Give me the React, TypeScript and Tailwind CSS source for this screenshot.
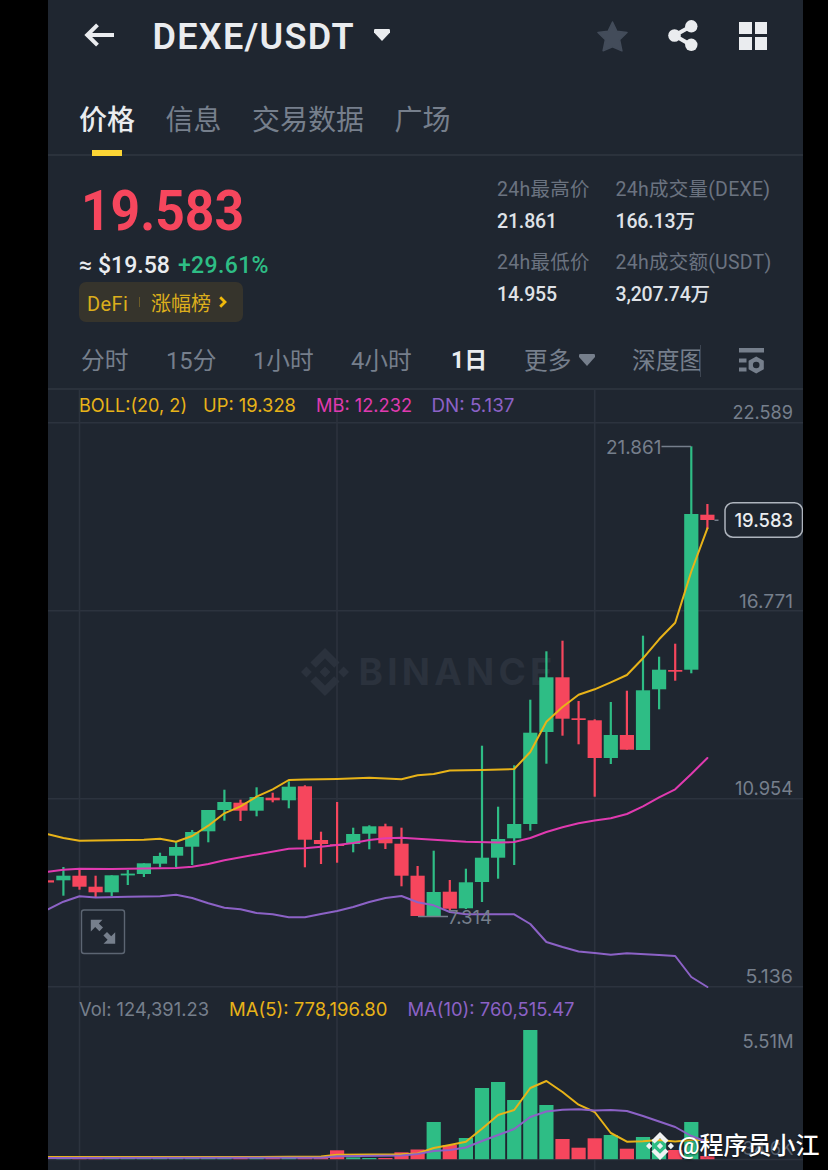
import React from "react";

const UP = "#2ebd85";
const DOWN = "#f6465d";
const YELLOW = "#e8b318";
const PINK = "#e03ab0";
const PURPLE = "#8c62c6";
const GRAY = "#767f8c";

const cx = (i: number) => 63.4 + 16.1 * i;

type Candle = [dir: 0 | 1, high: number, top: number, bottom: number, low: number];

const candles: Candle[] = [
  [1, 867, 875.7, 880.3, 895.7],
  [0, 869, 875.7, 886.7, 889.7],
  [0, 875.7, 886.7, 892.3, 897],
  [1, 875.3, 875.3, 892.3, 896],
  [1, 870, 873.6, 875.4, 885],
  [1, 863.3, 863.3, 874, 877],
  [1, 852.7, 856, 863.7, 867.3],
  [1, 842.3, 847, 855.7, 867.3],
  [1, 830, 832, 846.7, 865],
  [1, 810, 810, 831.3, 842.3],
  [1, 789.7, 802, 810, 820.7],
  [0, 799.7, 802.7, 810.7, 821],
  [1, 787.3, 797, 810.7, 816.3],
  [0, 792.7, 797.7, 800.3, 802.3],
  [1, 781.3, 786.7, 800.3, 808.3],
  [0, 785.3, 786.3, 839.7, 867.3],
  [0, 831.7, 840, 844, 864],
  [0, 802, 844.3, 846, 862.7],
  [1, 827.7, 834, 844, 852.3],
  [1, 825.3, 826.3, 833.7, 849.3],
  [0, 823.7, 826.3, 843.3, 849],
  [0, 827.7, 843.7, 875.7, 886.3],
  [0, 866, 875.7, 916, 916],
  [1, 850.7, 892, 916.3, 916.3],
  [0, 880, 891.7, 908.7, 910],
  [1, 868.7, 882.3, 908.3, 909],
  [1, 745.7, 857.7, 882, 902],
  [1, 806.7, 839, 857.7, 878.7],
  [1, 765.3, 824, 838.3, 865],
  [1, 699.7, 732.7, 824, 830.7],
  [1, 651.3, 677.3, 732, 763.7],
  [0, 640.7, 677.3, 718.7, 735.7],
  [0, 701, 718.3, 720, 744.3],
  [0, 719.3, 720.3, 758, 796.7],
  [1, 702, 735, 758, 764],
  [0, 690.7, 735, 749.7, 749.7],
  [1, 635.7, 690.3, 750, 750],
  [1, 656.7, 669.7, 689.3, 709.3],
  [0, 643.7, 670, 671.7, 680.7],
  [1, 446.3, 514, 669.7, 673.3],
  [0, 504, 514.7, 520, 529],
];

const volumes = [
  1158, 1158, 1158, 1158, 1158, 1158, 1158, 1158, 1157.6, 1157.6, 1157.6, 1158, 1157.6, 1158, 1158,
  1157.4, 1157.4, 1150.3, 1157.4, 1158, 1158, 1152.3, 1149.5, 1122, 1145, 1138, 1088, 1082, 1100,
  1030, 1105, 1139, 1147.7, 1138.3, 1135, 1148.7, 1137, 1139, 1150, 1122, 1156,
];

type Point = [index: number, y: number];

const bollUp: Point[] = [
  [-0.95, 834.3], [0, 838], [1, 840.7], [3, 840.3], [5, 839.8], [6, 838.7], [7, 841.7], [8, 836],
  [9, 825.7], [10, 813.3], [11, 806.3], [12, 796.7], [13, 789.3], [14, 780], [15, 779.6], [17, 779],
  [19, 777.7], [20, 778.4], [21, 779.3], [22, 775.3], [23, 774], [24, 770.5], [26, 770], [28, 769],
  [29, 752], [30, 721.7], [31, 707], [32, 694.7], [33, 689.3], [34, 682.3], [35, 675], [36, 658.3],
  [37, 639.3], [38, 622.7], [39, 571.5], [40, 528.3],
];

const bollMid: Point[] = [
  [-0.95, 871.7], [0, 869.7], [1, 868.7], [3, 869], [7, 868], [8, 866.7], [9, 864], [10, 860.3],
  [14, 848.7], [15, 848.3], [16, 846.7], [17, 845], [18, 843], [19, 840], [20, 838.3], [21, 837.7],
  [23, 839.7], [25, 841.7], [27, 842.5], [28, 842], [29, 838], [30, 832], [31, 827.3], [32, 823.3],
  [33, 820.5], [34, 818.3], [35, 814], [36, 806.3], [37, 797.3], [38, 789.3], [39, 774], [40, 758],
];

const bollDown: Point[] = [
  [-0.95, 909.3], [0, 901.7], [1, 896.3], [2, 897.5], [4, 896.7], [6, 896.3], [7, 894.8], [8, 898],
  [9, 903.3], [10, 907.7], [11, 909.3], [12, 913], [13, 914.3], [14, 917.3], [15, 917.3], [16, 914],
  [17, 911], [18, 907], [19, 902], [20, 898], [21, 896], [22, 902.3], [23, 905.3], [24, 912],
  [25, 914.3], [28, 914.3], [29, 924], [30, 942], [31, 947], [32, 951.5], [33, 953], [34, 954.7],
  [35, 953.3], [37, 955], [38, 956], [39, 977], [40, 987],
];

const volMa5: Point[] = [
  [-0.95, 1157], [12, 1157], [16, 1156.5], [17, 1154.8], [21, 1154.3], [22, 1153.5], [23, 1148],
  [24, 1145], [25, 1141.7], [26, 1128.7], [27, 1115], [28, 1110], [29, 1088], [30, 1081],
  [31, 1092], [32, 1104.7], [33, 1112], [34, 1133], [35, 1141.7], [36, 1141.3], [37, 1140],
  [38, 1141.5], [39, 1140], [40, 1140],
];

const volMa10: Point[] = [
  [-0.95, 1158], [16, 1157.7], [17, 1156.3], [21, 1155.5], [22, 1154], [23, 1151], [24, 1150],
  [25, 1147.5], [26, 1141], [27, 1135], [28, 1129], [29, 1117], [30, 1111.5], [31, 1109.7],
  [32, 1109.3], [33, 1110.5], [34, 1110], [35, 1111], [36, 1116], [37, 1121.5], [38, 1127],
  [39, 1136], [40, 1142],
];

function Series({ data, color }: { data: Point[]; color: string }) {
  return (
    <polyline
      points={data.map(([i, y]) => `${cx(i).toFixed(1)},${y}`).join(" ")}
      fill="none"
      stroke={color}
      strokeWidth={2}
      strokeLinejoin="round"
      strokeLinecap="round"
    />
  );
}

interface LabelProps {
  x: number;
  y: number;
  w: number;
  color: string;
  children: string;
  weight?: number;
}

function Label({ x, y, w, color, children, weight = 400 }: LabelProps) {
  return (
    <text x={x} y={y} textLength={w} lengthAdjust="spacingAndGlyphs" fill={color} fontSize={18.8} fontWeight={weight}>
      {children}
    </text>
  );
}

function BinanceMark({ x, y, size, color }: { x: number; y: number; size: number; color: string }) {
  return (
    <svg x={x} y={y} width={size} height={size} viewBox="0 0 24 24" fill={color}>
      <path d="M7.4 9.9 12 5.3l4.6 4.6 2.7-2.7L12 0 4.7 7.2zM0 12l2.7-2.7L5.4 12l-2.7 2.7zM7.4 14.1 12 18.7l4.6-4.6 2.7 2.7L12 24l-7.3-7.2zM18.6 12l2.7-2.7L24 12l-2.7 2.7zM12 9.3l2.7 2.7-2.7 2.7L9.3 12z" />
    </svg>
  );
}

function Chart() {
  return (
    <svg
      className="block h-[781px] w-[755px] font-['Inter','Liberation_Sans',sans-serif]"
      viewBox="48 389 755 781"
    >
      <g stroke="#2c333e" strokeWidth={1.6}>
        {[422.8, 610.8, 798.8, 986.8, 1159.5].map((y) => (
          <line key={y} x1={48} x2={803} y1={y} y2={y} />
        ))}
        {[79.5, 337, 594.7].map((x) => (
          <line key={x} x1={x} x2={x} y1={390} y2={1170} />
        ))}
      </g>

      <BinanceMark x={301} y={648} size={48} color="#2b323d" />
      <text x={358.5} y={685} textLength={194} fontSize={37} fontWeight={700} fill="#2b323d">
        BINANCE
      </text>

      <rect x={48} y={880.3} width={6} height={2.2} fill={DOWN} />
      {candles.map(([dir, high, top, bottom, low], i) => (
        <g key={i} fill={dir ? UP : DOWN}>
          <rect x={cx(i) - 1.1} y={high} width={2.2} height={low - high} />
          <rect x={cx(i) - 7.1} y={top} width={14.2} height={bottom - top} />
          <rect x={cx(i) - 7.1} y={volumes[i]} width={14.2} height={1159.2 - volumes[i]} />
        </g>
      ))}

      <Series data={bollUp} color={YELLOW} />
      <Series data={bollMid} color={PINK} />
      <Series data={bollDown} color={PURPLE} />
      <Series data={volMa5} color={YELLOW} />
      <Series data={volMa10} color={PURPLE} />

      <Label x={79} y={412} w={108} color={YELLOW}>BOLL:(20, 2)</Label>
      <Label x={203} y={412} w={93} color={YELLOW}>UP: 19.328</Label>
      <Label x={316} y={412} w={96} color={PINK}>MB: 12.232</Label>
      <Label x={431.5} y={412} w={83} color={PURPLE}>DN: 5.137</Label>

      <Label x={732.5} y={419} w={60.5} color={GRAY}>22.589</Label>
      <Label x={739} y={607.5} w={54} color={GRAY}>16.771</Label>
      <Label x={735} y={795} w={58} color={GRAY}>10.954</Label>
      <Label x={745.5} y={983} w={47.5} color={GRAY}>5.136</Label>
      <Label x={742.5} y={1048.3} w={51} color={GRAY}>5.51M</Label>
      <Label x={742.5} y={1155} w={51} color="#59616d">34.6K</Label>

      <Label x={606} y={453.5} w={55.5} color={GRAY}>21.861</Label>
      <path d="M661.5 446.4H691M418 916.5h30M714.5 520.2h4" stroke={GRAY} strokeWidth={1.5} />
      <Label x={448} y={923.5} w={44} color={GRAY}>7.314</Label>

      <rect x={725} y={502.8} width={77.5} height={34.4} rx={8} fill="#1f2630" stroke="#aeb4bd" strokeWidth={1.5} />
      <Label x={734.5} y={527} w={58.5} color="#eaecef" weight={500}>19.583</Label>

      <g>
        <rect x={81.5} y={910} width={43} height={43.5} rx={2.5} fill="#1f2630" stroke="#5c6572" strokeWidth={1.4} />
        <path
          d="M90.8 919.7H102.5L98.8 923.4 103 927.6 99.4 931.2 95.2 927 90.8 931.4zM115.2 943.8H103.5L107.6 939.8 103.4 935.6 107 932 111.2 936.2 115.2 932.2z"
          fill={GRAY}
        />
      </g>

      <Label x={79} y={1016.3} w={130} color={GRAY}>Vol: 124,391.23</Label>
      <Label x={229} y={1016.3} w={158.5} color={YELLOW}>MA(5): 778,196.80</Label>
      <Label x={407.5} y={1016.3} w={167} color={PURPLE}>MA(10): 760,515.47</Label>
    </svg>
  );
}

function TopBar() {
  return (
    <div className="flex h-[72px] items-center pl-[36px] text-[#eaecef]">
      <svg className="mb-[2px] h-6 w-[31px] shrink-0" viewBox="0 0 31 24" fill="none" stroke="currentColor" strokeWidth="4">
        <path d="M30 12H3M13.5 1.8 3.2 12l10.3 10.2" />
      </svg>
      <h1 className="ml-[37.5px] w-[203.5px] pt-px text-[36px] leading-none font-semibold tracking-[1.3px] whitespace-nowrap">
        DEXE/USDT
      </h1>
      <svg className="mb-[3px] ml-[18px] h-3 w-4 shrink-0" viewBox="0 0 16 12" fill="currentColor">
        <path d="M0 1.2Q0 0 1.2 0H14.8Q16 0 16 1.2V3.5L8 12 0 3.5z" />
      </svg>
      <svg className="ml-[207px] h-[31px] w-[31px] shrink-0" viewBox="0 0 31 31" fill="#434c5a" stroke="#434c5a" strokeWidth="1.5" strokeLinejoin="round">
        <path d="m15.5 1 4.4 9.3 10.1 1.1-7.4 7.2 2.3 11.2-9.4-4.1-9.4 4.1 2.3-11.2L1 11.4l10.1-1.1z" />
      </svg>
      <svg className="mb-[2px] ml-[39.5px] h-[31px] w-[30px] shrink-0" viewBox="0 0 30 31" fill="currentColor">
        <path d="M6.5 15.5 23 6.3M6.5 15.5 23 25" stroke="currentColor" strokeWidth="4" />
        <circle cx="6.5" cy="15.5" r="6.3" />
        <circle cx="23.3" cy="6.3" r="6.2" />
        <circle cx="23.3" cy="24.8" r="6.2" />
      </svg>
      <div className="mb-px ml-[41.5px] grid grid-cols-[12.5px_12.5px] gap-[3px]">
        <i className="h-[12.5px] bg-[#eaecef]" />
        <i className="h-[12.5px] bg-[#eaecef]" />
        <i className="h-[12.5px] bg-[#eaecef]" />
        <i className="h-[12.5px] bg-[#eaecef]" />
      </div>
    </div>
  );
}

function Tabs() {
  return (
    <nav className="flex h-[84px] gap-[30.5px] border-b-2 border-[#2b323c] pl-[31px] text-[28px] leading-[40px] text-[#767f8c]">
      <div className="flex w-[56px] flex-col items-center pt-[29px] font-medium text-[#eaecef]">
        <span>价格</span>
        <i className="mt-[9px] h-[6px] w-[30px] shrink-0 bg-[#fcd535]" />
      </div>
      <span className="pt-[29px]">信息</span>
      <span className="pt-[29px]">交易数据</span>
      <span className="pt-[29px]">广场</span>
    </nav>
  );
}

function Stat({ label, value }: { label: string; value: string }) {
  return (
    <div className="h-[72.5px]">
      <div className="text-[19.5px] leading-[24px] tracking-[0.25px] whitespace-nowrap text-[#6b7380]">{label}</div>
      <div className="mt-[8px] text-[19.5px] leading-[24px] font-medium tracking-[-0.15px] whitespace-nowrap text-[#dfe2e7]">{value}</div>
    </div>
  );
}

function Summary() {
  return (
    <section className="flex h-[172px] pl-[31px]">
      <div className="w-[418px]">
        <div className="mt-[28px] ml-[2px] h-[56px] w-[174px] origin-left scale-x-[0.93] text-[55.5px] leading-[56px] font-bold text-[#f6465d]">19.583</div>
        <div className="mt-[13px] flex h-[26px] items-center gap-[8px] text-[23px] leading-[26px] font-medium whitespace-nowrap">
          <span className="tracking-[0.05px] text-[#eaecef]">≈ $19.58</span>
          <span className="tracking-[0.35px] text-[#2ebd85]">+29.61%</span>
        </div>
        <div className="mt-[3px] flex h-[40px] w-[164px] items-center rounded-[7px] bg-[#36342c] pl-[8px] text-[20px] leading-[40px] text-[#dcae1c]">
          <span className="w-[41px] pt-[3px] tracking-[0.4px]">DeFi</span>
          <i className="ml-[11px] h-[10px] w-px bg-[#6d5c28]" />
          <span className="ml-[11px] pt-[3px]">涨幅榜</span>
          <svg className="ml-[8px] h-3 w-2" viewBox="0 0 8 12" fill="none" stroke="#f0b90b" strokeWidth="2.8">
            <path d="m1.2 1.2 4.8 4.8-4.8 4.8" />
          </svg>
        </div>
      </div>
      <div className="w-[118.5px] pt-[22px]">
        <Stat label="24h最高价" value="21.861" />
        <Stat label="24h最低价" value="14.955" />
      </div>
      <div className="pt-[22px]">
        <Stat label="24h成交量(DEXE)" value="166.13万" />
        <Stat label="24h成交额(USDT)" value="3,207.74万" />
      </div>
    </section>
  );
}

function Intervals() {
  return (
    <div className="flex h-[62px] items-center border-b-2 border-[#2b323c] pt-[6px] pl-[33px] text-[23.7px] leading-[32px] whitespace-nowrap text-[#767f8c]">
      <span className="w-[85px]">分时</span>
      <span className="w-[87px]">15分</span>
      <span className="w-[98px]">1小时</span>
      <span className="w-[100px]">4小时</span>
      <span className="w-[73px] text-[23px] font-bold text-[#eaecef]">1日</span>
      <span className="w-[55px]">更多</span>
      <svg className="mb-[2px] h-3 w-4 shrink-0" viewBox="0 0 16 12" fill="currentColor">
        <path d="M0 1.2Q0 0 1.2 0H14.8Q16 0 16 1.2V3L8 12 0 3z" />
      </svg>
      <span className="ml-[37px] w-[69px] overflow-hidden border-r border-[#3d4551]">深度图</span>
      <svg className="ml-[38px] h-[26px] w-[26px] shrink-0" viewBox="0 0 26 26" fill="currentColor">
        <path d="M0 0h25v4.4H0zM0 10.4h7.5v4H0zM0 19.6h7.5v4H0z" />
        <path fillRule="evenodd" d="m17.2 8.4 7.6 4.3v8.6l-7.6 4.3-7.6-4.3v-8.6zM17.2 13.7a3.3 3.3 0 1 0 0 6.6 3.3 3.3 0 0 0 0-6.6z" />
      </svg>
    </div>
  );
}

export default function App() {
  return (
    <div className="relative h-[1170px] w-[828px] overflow-hidden bg-black pl-[48px] font-['Roboto','Noto_Sans_CJK_SC',sans-serif]">
      <main className="h-full w-[755px] bg-[#1f2630]">
        <TopBar />
        <Tabs />
        <Summary />
        <Intervals />
        <div className="-mt-px">
          <Chart />
        </div>
      </main>
      <div className="absolute top-[1128px] left-[646px] flex items-center text-white">
        <svg className="h-[28px] w-[28px]" viewBox="0 0 28 28">
          <BinanceMark x={0} y={0} size={28} color="#f0f2f3" />
        </svg>
        <span className="ml-[4px] text-[24px] leading-[36px] font-medium whitespace-nowrap [text-shadow:0_1px_2px_rgba(0,0,0,0.6)]">
          @程序员小江
        </span>
      </div>
    </div>
  );
}
